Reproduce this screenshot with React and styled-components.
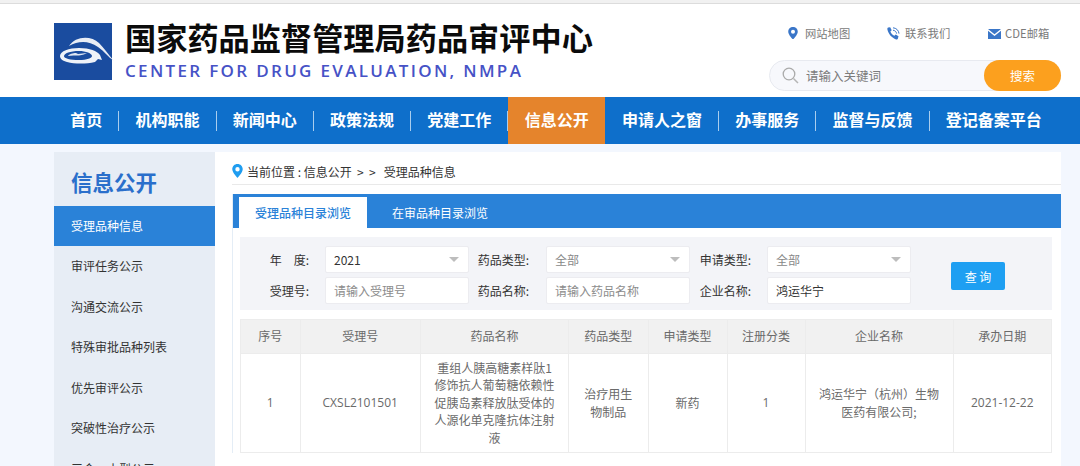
import React from 'react';
import styled, { createGlobalStyle } from 'styled-components';

const Global = createGlobalStyle`
  * { box-sizing: border-box; }
  html, body { margin: 0; padding: 0; height: 466px; overflow: hidden; background: #f3f7fe; }
  body { font-family: "Noto Sans CJK SC", "Noto Sans", sans-serif; }
`;

const Page = styled.div`height: 466px; overflow: hidden;`;
const TopStrip = styled.div`height: 4px; background: #f1f1f1; border-bottom: 1px solid #dcdcdc;`;
const Header = styled.header`
  height: 93px; background: #fff; display: flex; padding: 0 19px 0 54px;
`;
const LogoBox = styled.svg`width: 58px; height: 57px; margin-top: 19px; margin-right: 13px; flex: none; overflow: visible;`;
const Brand = styled.div`display: flex; flex-direction: column; padding-top: 14px;`;
const Title = styled.div`
  font-size: 31.2px; line-height: 38px; font-weight: 700; color: #0b0b0b; white-space: nowrap;
`;
const Subtitle = styled.div`
  font-family: "Open Sans", sans-serif; font-size: 17px; line-height: 24px; margin-top: 3px;
  font-weight: 600; letter-spacing: 2.32px; color: #4652c6; white-space: nowrap;
`;
const Tools = styled.div`
  margin-left: auto; width: 292px; display: flex; flex-direction: column; align-items: stretch; padding-top: 20px;
`;
const Links = styled.div`display: flex; height: 18px; padding-left: 19px;`;
const LinkItem = styled.a`
  display: flex; align-items: center; flex: none; width: ${p => p.$w}px; gap: ${p => p.$gap}px;
  font-size: 11.3px; color: #7a7a7a; white-space: nowrap;
`;
const Search = styled.div`
  margin-top: 18px; height: 31px; border-radius: 16px; background: #f7f8fc; border: 1px solid #e8eaf0;
  display: flex; align-items: center; padding-left: 12px;
`;
const SearchInput = styled.input`
  flex: 1; min-width: 0; margin-left: 7px; border: 0; outline: 0; background: transparent;
  font: inherit; font-size: 12.5px; color: #777; padding: 0;
  &::placeholder { color: #7c7c7c; opacity: 1; }
`;
const SearchButton = styled.button`
  width: 77px; height: 31px; margin-right: -1px; border: 0; border-radius: 16px; background: #fca01e;
  color: #fff; font: inherit; font-size: 12.5px; padding: 0;
`;
const Nav = styled.nav`
  height: 47px; background: #0e6fcb; display: flex; align-items: center; padding-left: 54px;
`;
const NavItem = styled.a`
  height: 47px; padding: 0 16.15px 3px; display: flex; align-items: center; font-size: 16px; font-weight: 700;
  color: #fff; white-space: nowrap; background: ${p => (p.$active ? '#e5842c' : 'transparent')};
`;
const NavSep = styled.span`
  width: 1px; height: 20px; background: ${p => (p.$hidden ? 'transparent' : '#a9cdee')}; flex: none;
`;
const Body = styled.div`display: flex; margin: 8px 19px 0 54px; height: 322px;`;
const Side = styled.aside`width: 161px; flex: none; background: #e7edf5; overflow: hidden;`;
const SideTitle = styled.div`
  height: 53.5px; padding: 16px 0 0 17px; font-size: 21.5px; line-height: 28px; font-weight: 700; color: #2a6fcb;
`;
const SideItem = styled.a`
  display: flex; align-items: center; height: 40.5px; padding: 0 0 1px 17px; font-size: 12px; white-space: nowrap;
  color: ${p => (p.$active ? '#fff' : '#333')}; background: ${p => (p.$active ? '#2a82d8' : 'transparent')};
`;
const Main = styled.main`flex: 1; background: #fff; padding-left: 17px; min-width: 0;`;
const Crumb = styled.div`
  height: 33px; padding-top: 6px; display: flex; align-items: center; gap: 4px; border-bottom: 1px solid #e9e9e9;
  font-size: 12px; color: #333; white-space: pre;
`;
const TabBox = styled.section`
  margin-top: 9px; padding-bottom: 0; border-left: 1px solid #e4edf6;
`;
const TabBar = styled.div`
  height: 34px; background: #2a82d8; display: flex; align-items: flex-end; padding-left: 6px;
`;
const Tab = styled.div`
  height: 31px; display: flex; align-items: center; font-size: 12px; white-space: nowrap;
  padding: 0 ${p => (p.$active ? 16 : 25)}px; font-weight: ${p => (p.$active ? 500 : 400)};
  color: ${p => (p.$active ? '#2a82d8' : '#fff')}; background: ${p => (p.$active ? '#fff' : 'transparent')};
`;
const TabBody = styled.div`padding: 9px 9px 0 7px;`;
const Filter = styled.div`
  height: 73px; background: #f3f4f8; padding: 9px 0 0 0; display: grid;
  grid-template-columns: 85px 144px 77px 144px 77px 144px 40px 54px;
  grid-template-rows: 27px 27px; row-gap: 4px; align-items: center;
`;
const Label = styled.label`
  font-size: 12px; color: #333; text-align: right; padding-right: ${p => p.$pad}px; white-space: pre;
  grid-column: ${p => p.$col || 'auto'};
`;
const Select = styled.div`
  height: 27px; background: #fff; border: 1px solid #ececf0; border-radius: 2px; display: flex; align-items: center;
  padding: 0 9px 0 8px; font-size: 12px; color: ${p => (p.$dark ? '#333' : '#888')};
  span { flex: 1; }
  i { width: 0; height: 0; border-left: 5px solid transparent; border-right: 5px solid transparent; border-top: 5px solid #bdbdbd; }
`;
const Field = styled.input`
  height: 27px; width: 100%; background: #fff; border: 1px solid #ececf0; border-radius: 2px; outline: 0;
  padding: 0 8px; font: inherit; font-size: 12px; color: #333;
  &::placeholder { color: #8c8c8c; opacity: 1; }
`;
const QueryButton = styled.button`
  grid-column: 8; grid-row: 1 / span 2; align-self: start; margin-top: 16px; height: 28px; width: 54px;
  border: 0; border-radius: 2px; background: #1e9ff2; color: #fff; font: inherit; font-size: 12px; padding: 0; white-space: pre;
`;
const Table = styled.table`
  margin-top: 9px; width: 811px; border-collapse: collapse; table-layout: fixed; font-size: 12px; color: #6a6a6a;
  th, td { border: 1px solid #ececec; text-align: center; padding: 0; }
  th { height: 33.5px; padding-bottom: 1px; background: #f1f1f1; font-weight: 400; }
  td { height: 99px; line-height: 17.5px; padding: 0 12px; }
`;
const Num = styled.span`font-family: "Open Sans", sans-serif; font-size: 12px;`;

const Pin = ({ color, size = 12 }) => (
  <svg width={size} height={size * 1.25} viewBox="0 0 12 15" style={{ flex: 'none' }}>
    <path fillRule="evenodd" fill={color} d="M6 0C2.7 0 .3 2.5.3 5.6.3 9.4 6 15 6 15s5.7-5.6 5.7-9.4C11.7 2.5 9.3 0 6 0Zm0 3.4a2.4 2.4 0 1 1 0 4.8 2.4 2.4 0 0 1 0-4.8Z" />
  </svg>
);
const Phone = () => (
  <svg width="13" height="13" viewBox="0 0 13 13" style={{ flex: 'none' }}>
    <path fill="#3a76c8" d="M1.2.6 3.2.2l1.5 3-1.3 1.2c.6 1.900 2 3.400 4 4.300l1.300-1.200 2.800 1.700-.6 2.200c-.2.800-1 1.200-1.800 1C4.800 11 1.500 7.400.4 2.600.2 1.600.5.800 1.200.600Z" />
    <path fill="none" stroke="#3a76c8" strokeWidth="1" d="M6 .8c3.300.2 5.700 2.600 6 5.800M6 3.200c1.900.2 3.300 1.500 3.600 3.400" />
  </svg>
);
const Mail = () => (
  <svg width="13" height="10" viewBox="0 0 13 10" style={{ flex: 'none', marginTop: 2 }}>
    <path fill="#3a76c8" d="M0 0h13L6.500 5.300 0 0Zm0 1.800 6.500 5.200L13 1.800V10H0V1.800Z" />
  </svg>
);
const Loupe = () => (
  <svg width="17" height="17" viewBox="0 0 17 17" style={{ flex: 'none' }}>
    <circle cx="7" cy="7" r="5.800" fill="none" stroke="#aaa" strokeWidth="1.300" />
    <path d="m11.500 11.500 4.500 4.500" stroke="#b5b5b5" strokeWidth="1.500" />
  </svg>
);
const Logo = () => (
  <LogoBox viewBox="0 0 58 57">
    <rect width="58" height="57" fill="#1a4c9f" />
    <path d="M15 23C21 13 37 12 45 20c5 5 9 11 15 18-6-4-10-10-16-14C34 17 24 18 15 23Z" fill="#e8edf5" />
    <path d="M6 33c0-5 9-8 19-8 11 0 18 3 21 7l2 5-4-1-3 3c-9 2-20 2-28 0-4-1-7-3-7-6Zm4 .2c0 2 6 3.800 15 3.800 8 0 13-2 13-4 0-2.500-6-5-13-5-9 0-15 2.500-15 5.200Z" fill="#eef2f8" fillRule="evenodd" />
    <path d="M14 33c1-2 5-3 8-3l2 1c3 0 6-1 9-1-2 1-4 2-8 2.500-4 0-7 0-11 .500Z" fill="#dfe6f2" />
  </LogoBox>
);

const navs = ['首页', '机构职能', '新闻中心', '政策法规', '党建工作', '信息公开', '申请人之窗', '办事服务', '监督与反馈', '登记备案平台'];
const sideItems = ['受理品种信息', '审评任务公示', '沟通交流公示', '特殊审批品种列表', '优先审评公示', '突破性治疗公示', '三合一小型公示'];
const cols = [59.5, 120.5, 148, 79.5, 79, 78, 148, 98.5];
const heads = ['序号', '受理号', '药品名称', '药品类型', '申请类型', '注册分类', '企业名称', '承办日期'];

export default function App() {
  return (
    <Page>
      <Global />
      <TopStrip />
      <Header>
        <Logo />
        <Brand>
          <Title>国家药品监督管理局药品审评中心</Title>
          <Subtitle>CENTER FOR DRUG EVALUATION, NMPA</Subtitle>
        </Brand>
        <Tools>
          <Links>
            <LinkItem $w={99} $gap={7}><Pin color="#3a76c8" size={10} />网站地图</LinkItem>
            <LinkItem $w={101} $gap={5}><Phone />联系我们</LinkItem>
            <LinkItem $w={72} $gap={4}><Mail />CDE邮箱</LinkItem>
          </Links>
          <Search>
            <Loupe />
            <SearchInput placeholder="请输入关键词" />
            <SearchButton>搜索</SearchButton>
          </Search>
        </Tools>
      </Header>
      <Nav>
        {navs.map((n, i) => (
          <React.Fragment key={n}>
            <NavItem $active={n === '信息公开'}>{n}</NavItem>
            {i < navs.length - 1 && <NavSep $hidden={n === '信息公开'} />}
          </React.Fragment>
        ))}
      </Nav>
      <Body>
        <Side>
          <SideTitle>信息公开</SideTitle>
          {sideItems.map((s, i) => <SideItem key={s} $active={i === 0}>{s}</SideItem>)}
        </Side>
        <Main>
          <Crumb><Pin color="#1f9df0" size={11} />当前位置 : 信息公开  &gt;  &gt;   受理品种信息</Crumb>
          <TabBox>
            <TabBar>
              <Tab $active>受理品种目录浏览</Tab>
              <Tab>在审品种目录浏览</Tab>
            </TabBar>
            <TabBody>
              <Filter>
                <Label $pad={16}>年　度:</Label>
                <Select $dark><span>2021</span><i /></Select>
                <Label $pad={17}>药品类型:</Label>
                <Select><span>全部</span><i /></Select>
                <Label $pad={16}>申请类型:</Label>
                <Select><span>全部</span><i /></Select>
                <QueryButton>查 询</QueryButton>
                <Label $pad={16} $col={1}>受理号:</Label>
                <Field placeholder="请输入受理号" />
                <Label $pad={17}>药品名称:</Label>
                <Field placeholder="请输入药品名称" />
                <Label $pad={16}>企业名称:</Label>
                <Field defaultValue="鸿运华宁" />
              </Filter>
              <Table>
                <colgroup>{cols.map((w, i) => <col key={i} style={{ width: w }} />)}</colgroup>
                <thead>
                  <tr>{heads.map(h => <th key={h}>{h}</th>)}</tr>
                </thead>
                <tbody>
                  <tr>
                    <td><Num>1</Num></td>
                    <td><Num>CXSL2101501</Num></td>
                    <td>重组人胰高糖素样肽1修饰抗人葡萄糖依赖性促胰岛素释放肽受体的人源化单克隆抗体注射液</td>
                    <td>治疗用生物制品</td>
                    <td>新药</td>
                    <td><Num>1</Num></td>
                    <td>鸿运华宁（杭州）生物医药有限公司;</td>
                    <td><Num>2021-12-22</Num></td>
                  </tr>
                </tbody>
              </Table>
            </TabBody>
          </TabBox>
        </Main>
      </Body>
    </Page>
  );
}
